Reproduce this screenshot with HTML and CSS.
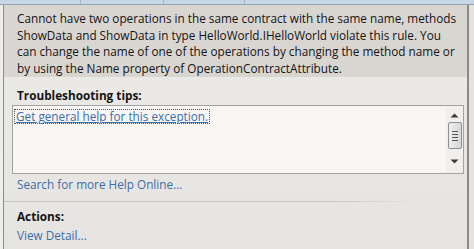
FILE: index.html
```html
<!DOCTYPE html>
<html>
<head>
<meta charset="utf-8">
<link rel="stylesheet" href="styles.css">
</head>
<body>
<div class="top"><span class="tab t1"></span><span class="tab t2"></span><span class="tab t3"></span></div>
<div class="shell">
  <div class="edge-l"></div>
  <div class="main">
    <div class="message">Cannot have two operations in the same contract with the same name, methods ShowData and ShowData in type HelloWorld.IHelloWorld violate this rule. You can change the name of one of the operations by changing the method name or by using the Name property of OperationContractAttribute.</div>
    <div class="lower">
      <div class="heading tips-title">Troubleshooting tips:</div>
      <div class="listbox">
        <div class="list-items">
          <a class="link focused" href="#">Get general help for this exception.</a>
        </div>
        <div class="scrollbar">
          <div class="arrow up"><svg width="9" height="5" viewBox="0 0 9 5"><path d="M0.5 4.5 L4.5 0.5 L8.5 4.5 Z" fill="#3c3c3c"/></svg></div>
          <div class="thumb"><span></span><span></span><span></span><span></span></div>
          <div class="track"></div>
          <div class="arrow down"><svg width="9" height="5" viewBox="0 0 9 5"><path d="M0.5 0.5 L4.5 4.5 L8.5 0.5 Z" fill="#3c3c3c"/></svg></div>
        </div>
      </div>
      <a class="link search" href="#">Search for more Help Online...</a>
      <div class="sep"></div>
      <div class="heading actions-title">Actions:</div>
      <a class="link view" href="#">View Detail...</a>
    </div>
  </div>
  <div class="edge-r"></div>
</div>
</body>
</html>
```
FILE: styles.css
```css
html, body {
  margin: 0;
  padding: 0;
  width: 474px;
  height: 249px;
  overflow: hidden;
  background: #e8e7e5;
  font-family: "Open Sans", "Noto Sans", sans-serif;
  font-size: 11.75px;
  color: #141414;
}
.top {
  height: 4px;
  background: #c8d7e7;
  border-bottom: 1px solid #98a2ad;
  display: flex;
}
.tab {
  height: 4px;
  border-right: 1px solid #aab8c6;
}
.t1 { width: 80px; }
.t2 { width: 82px; }
.t3 { width: 80px; }
.shell {
  display: flex;
  height: 244px;
}
.edge-l {
  width: 3px;
  background: #ededeb;
}
.edge-r {
  width: 5px;
  background: #e4e3e1;
}
.main {
  flex: 1;
  border-left: 1px solid #8e8e8e;
  border-right: 2px solid #8a8a8a;
  display: flex;
  flex-direction: column;
  min-width: 0;
}
.message {
  background: #d9d6d2;
  height: 72px;
  padding: 5px 8px 0 13px;
  box-sizing: border-box;
  line-height: 16.7px;
}
.lower {
  flex: 1;
  background: linear-gradient(#ebe9e6, #e6e4e1);
  display: flex;
  flex-direction: column;
}
.heading {
  font-weight: bold;
  padding-left: 13px;
  line-height: 16px;
}
.tips-title {
  margin-top: 10px;
}
.listbox {
  margin: 2px 3px 0 8px;
  height: 69px;
  box-sizing: border-box;
  border: 1px solid #a3a3a3;
  background: #f7f6f4;
  display: flex;
}
.list-items {
  flex: 1;
  padding: 2px 0 0 2px;
}
.link {
  color: #3a6ea8;
  text-decoration: none;
  line-height: 15px;
  align-self: flex-start;
}
.focused {
  text-decoration: underline;
  outline: 1px dotted #555;
  padding: 0 1px;
  display: inline-block;
  line-height: 13px;
}
.scrollbar {
  width: 17px;
  padding: 3px 0 5px;
  box-sizing: border-box;
  display: flex;
  flex-direction: column;
  align-items: center;
  background: #f0efed;
}
.arrow {
  height: 13px;
  display: flex;
  align-items: center;
  justify-content: center;
}
.thumb {
  width: 14px;
  height: 27px;
  box-sizing: border-box;
  border: 1px solid #8f8f8f;
  border-radius: 2px;
  background: linear-gradient(90deg, #eeeeec, #d8d7d5);
  display: flex;
  flex-direction: column;
  justify-content: center;
  align-items: center;
  gap: 2px;
}
.thumb span {
  width: 6px;
  height: 1px;
  background: #555;
}
.track { flex: 1; }
.search {
  margin: 3px 0 0 13px;
}
.sep {
  margin: 9px 50px 0 0;
  height: 1px;
  background: linear-gradient(90deg, #c7c5c2 80%, rgba(199,197,194,0));
}
.actions-title {
  margin-top: 6px;
}
.view {
  margin: 4px 0 0 13px;
}
```
